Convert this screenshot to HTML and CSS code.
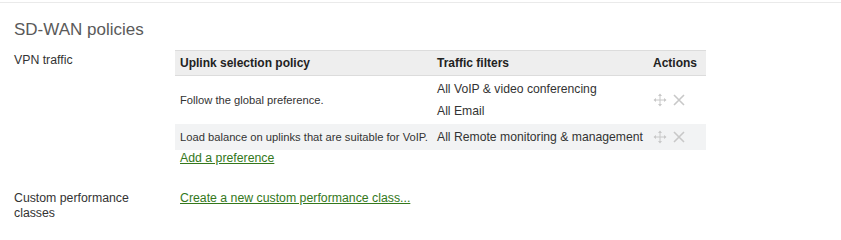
FILE: index.html
```html
<!DOCTYPE html>
<html>
<head>
<meta charset="utf-8">
<link rel="stylesheet" href="styles.css">
</head>
<body>
<div class="topline"></div>
<div class="page">
  <h1 class="title">SD-WAN policies</h1>
  <div class="row">
    <div class="label">VPN traffic</div>
    <div class="content">
      <table class="grid">
        <colgroup>
          <col class="w1">
          <col class="w2">
          <col class="w3">
        </colgroup>
        <thead>
          <tr>
            <th>Uplink selection policy</th>
            <th>Traffic filters</th>
            <th>Actions</th>
          </tr>
        </thead>
        <tbody>
          <tr>
            <td class="pol">Follow the global preference.</td>
            <td class="flt">
              <div class="filter">All VoIP &amp; video conferencing</div>
              <div class="filter">All Email</div>
            </td>
            <td>
              <span class="actions">
                <svg class="ico" width="14" height="14" viewBox="0 0 14 14"><g fill="none" stroke="#c8c8c8" stroke-width="1"><path d="M7 1.5V12.5M1.5 7H12.5"/></g><g fill="#c8c8c8"><path d="M7 0.5L9 3H5Z"/><path d="M7 13.5L9 11H5Z"/><path d="M0.5 7L3 5V9Z"/><path d="M13.5 7L11 5V9Z"/></g></svg>
                <svg class="ico" width="12" height="12" viewBox="0 0 12 12"><path d="M1 1L11 11M11 1L1 11" stroke="#c8c8c8" stroke-width="1.6" fill="none"/></svg>
              </span>
            </td>
          </tr>
          <tr class="alt">
            <td class="pol">Load balance on uplinks that are suitable for VoIP.</td>
            <td class="flt"><div class="filter">All Remote monitoring &amp; management</div></td>
            <td>
              <span class="actions">
                <svg class="ico" width="14" height="14" viewBox="0 0 14 14"><g fill="none" stroke="#c8c8c8" stroke-width="1"><path d="M7 1.5V12.5M1.5 7H12.5"/></g><g fill="#c8c8c8"><path d="M7 0.5L9 3H5Z"/><path d="M7 13.5L9 11H5Z"/><path d="M0.5 7L3 5V9Z"/><path d="M13.5 7L11 5V9Z"/></g></svg>
                <svg class="ico" width="12" height="12" viewBox="0 0 12 12"><path d="M1 1L11 11M11 1L1 11" stroke="#c8c8c8" stroke-width="1.6" fill="none"/></svg>
              </span>
            </td>
          </tr>
        </tbody>
      </table>
      <a class="link add" href="#">Add a preference</a>
    </div>
  </div>
  <div class="row row2">
    <div class="label">Custom performance classes</div>
    <div class="content">
      <a class="link" href="#">Create a new custom performance class...</a>
    </div>
  </div>
</div>
</body>
</html>
```

FILE: styles.css
```css
html, body {
  margin: 0;
  padding: 0;
  background: #fff;
}
body {
  font-family: "Liberation Sans", Arial, sans-serif;
  color: #333;
  font-size: 12.3px;
}
.topline {
  margin-top: 2px;
  height: 1px;
  background: #eaeaea;
}
.page {
  padding: 0 14px;
}
.title {
  margin: 15px 0 0 0;
  font-size: 17px;
  font-weight: normal;
  color: #5a5a5a;
  line-height: 24px;
}
.row {
  display: flex;
  margin-top: 8px;
}
.label {
  width: 140px;
  flex: none;
  padding-top: 3px;
  font-size: 12.3px;
  line-height: 15px;
  color: #333;
  margin-right: 21px;
}
.content {
  display: flex;
  flex-direction: column;
  align-items: flex-start;
}
.grid {
  border-collapse: collapse;
  table-layout: fixed;
  width: 531px;
}
.w1 { width: 257px; }
.w2 { width: 216px; }
.w3 { width: 58px; }
.grid th {
  background: #eeeeee;
  border-top: 1px solid #dcdcdc;
  border-bottom: 1px solid #dcdcdc;
  text-align: left;
  font-weight: bold;
  font-size: 12px;
  height: 24px;
  padding: 0 5px;
  color: #222;
}
.grid td {
  padding: 2px 5px;
  vertical-align: middle;
  color: #333;
  white-space: nowrap;
  overflow: visible;
}
.grid td.pol {
  font-size: 11.2px;
}
.grid td.flt {
  font-size: 12.2px;
}
.grid tr.alt td {
  background: #f2f3f4;
}
.filter {
  line-height: 22px;
}
.actions {
  display: flex;
  align-items: center;
  gap: 6px;
}
.ico {
  display: block;
}
.link {
  color: #34781b;
  text-decoration: underline;
  font-size: 12.3px;
  margin-left: 5px;
}
.add {
  margin-top: 0;
  line-height: 16px;
}
.row2 {
  margin-top: 25px;
}
.row2 .label {
  padding-top: 0;
}
.row2 .link {
  line-height: 16px;
  margin-top: -1px;
}
```
